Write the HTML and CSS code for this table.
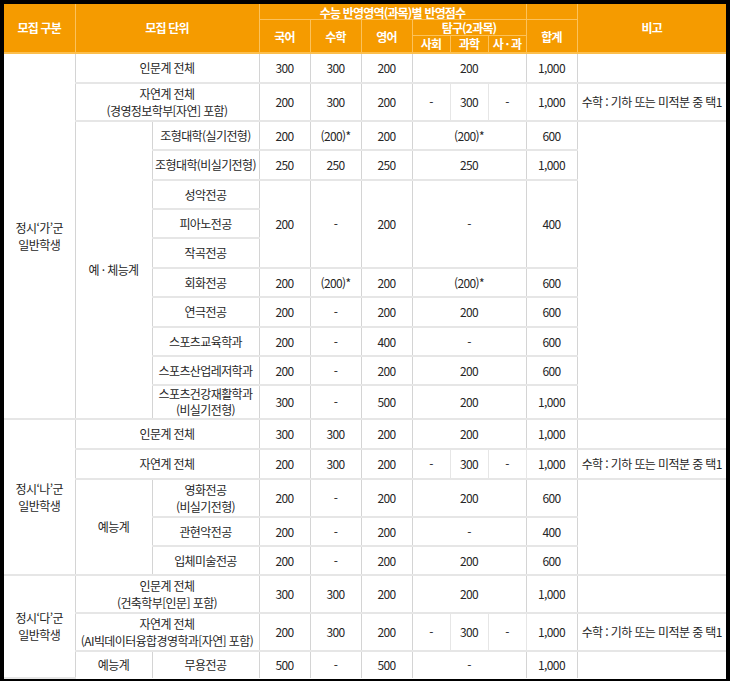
FILE: index.html
```html
<!DOCTYPE html>
<html lang="ko">
<head>
<meta charset="utf-8">
<title>수능 반영영역별 반영점수</title>
<link rel="stylesheet" href="styles.css">
</head>
<body>
<table class="score">
  <colgroup>
    <col class="c-gubun">
    <col class="c-unit-a">
    <col class="c-unit-b">
    <col class="c-n">
    <col class="c-n">
    <col class="c-n">
    <col class="c-s">
    <col class="c-s">
    <col class="c-s">
    <col class="c-n">
    <col class="c-note">
  </colgroup>
  <thead>
    <tr class="h15">
      <th rowspan="3">모집 구분</th>
      <th rowspan="3" colspan="2">모집 단위</th>
      <th colspan="6" class="top">수능 반영영역(과목)별 반영점수</th>
      <th class="blank"></th>
      <th rowspan="3">비고</th>
    </tr>
    <tr class="h16">
      <th rowspan="2" class="big">국어</th>
      <th rowspan="2" class="big">수학</th>
      <th rowspan="2" class="big">영어</th>
      <th colspan="3">탐구(2과목)</th>
      <th rowspan="2" class="big">합계</th>
    </tr>
    <tr class="h17">
      <th>사회</th>
      <th>과학</th>
      <th>사 · 과</th>
    </tr>
  </thead>
  <tbody>
    <!-- 가군 -->
    <tr class="r30 grp first">
      <td rowspan="12">정시‘가’군<br>일반학생</td>
      <td colspan="2">인문계 전체</td>
      <td>300</td><td>300</td><td>200</td>
      <td colspan="3">200</td>
      <td>1,000</td>
      <td></td>
    </tr>
    <tr class="r38">
      <td colspan="2">자연계 전체<br>(경영정보학부[자연] 포함)</td>
      <td>200</td><td>300</td><td>200</td>
      <td class="sub">-</td><td class="sub">300</td><td class="sub">-</td>
      <td>1,000</td>
      <td class="note">수학 : 기하 또는 미적분 중 택1</td>
    </tr>
    <tr class="r29">
      <td rowspan="10">예 · 체능계</td>
      <td>조형대학(실기전형)</td>
      <td>200</td><td>(200)*</td><td>200</td>
      <td colspan="3">(200)*</td>
      <td>600</td>
      <td rowspan="10"></td>
    </tr>
    <tr class="r30">
      <td>조형대학(비실기전형)</td>
      <td>250</td><td>250</td><td>250</td>
      <td colspan="3">250</td>
      <td>1,000</td>
    </tr>
    <tr class="r29">
      <td>성악전공</td>
      <td rowspan="3">200</td><td rowspan="3">-</td><td rowspan="3">200</td>
      <td rowspan="3" colspan="3">-</td>
      <td rowspan="3">400</td>
    </tr>
    <tr class="r29">
      <td>피아노전공</td>
    </tr>
    <tr class="r30">
      <td>작곡전공</td>
    </tr>
    <tr class="r29">
      <td>회화전공</td>
      <td>200</td><td>(200)*</td><td>200</td>
      <td colspan="3">(200)*</td>
      <td>600</td>
    </tr>
    <tr class="r30">
      <td>연극전공</td>
      <td>200</td><td>-</td><td>200</td>
      <td colspan="3">200</td>
      <td>600</td>
    </tr>
    <tr class="r29">
      <td>스포츠교육학과</td>
      <td>200</td><td>-</td><td>400</td>
      <td colspan="3">-</td>
      <td>600</td>
    </tr>
    <tr class="r29">
      <td>스포츠산업레저학과</td>
      <td>200</td><td>-</td><td>200</td>
      <td colspan="3">200</td>
      <td>600</td>
    </tr>
    <tr class="r34">
      <td class="tight">스포츠건강재활학과<br>(비실기전형)</td>
      <td>300</td><td>-</td><td>500</td>
      <td colspan="3">200</td>
      <td>1,000</td>
    </tr>
    <!-- 나군 -->
    <tr class="r30 grp">
      <td rowspan="5">정시‘나’군<br>일반학생</td>
      <td colspan="2">인문계 전체</td>
      <td>300</td><td>300</td><td>200</td>
      <td colspan="3">200</td>
      <td>1,000</td>
      <td></td>
    </tr>
    <tr class="r30">
      <td colspan="2">자연계 전체</td>
      <td>200</td><td>300</td><td>200</td>
      <td class="sub">-</td><td class="sub">300</td><td class="sub">-</td>
      <td>1,000</td>
      <td class="note">수학 : 기하 또는 미적분 중 택1</td>
    </tr>
    <tr class="r38">
      <td rowspan="3">예능계</td>
      <td>영화전공<br>(비실기전형)</td>
      <td>200</td><td>-</td><td>200</td>
      <td colspan="3">200</td>
      <td>600</td>
      <td rowspan="3"></td>
    </tr>
    <tr class="r29">
      <td>관현악전공</td>
      <td>200</td><td>-</td><td>200</td>
      <td colspan="3">-</td>
      <td>400</td>
    </tr>
    <tr class="r29">
      <td>입체미술전공</td>
      <td>200</td><td>-</td><td>200</td>
      <td colspan="3">200</td>
      <td>600</td>
    </tr>
    <!-- 다군 -->
    <tr class="r38 grp">
      <td rowspan="3">정시‘다’군<br>일반학생</td>
      <td colspan="2">인문계 전체<br>(건축학부[인문] 포함)</td>
      <td>300</td><td>300</td><td>200</td>
      <td colspan="3">200</td>
      <td>1,000</td>
      <td></td>
    </tr>
    <tr class="r38">
      <td colspan="2">자연계 전체<br>(AI빅데이터융합경영학과[자연] 포함)</td>
      <td>200</td><td>300</td><td>200</td>
      <td class="sub">-</td><td class="sub">300</td><td class="sub">-</td>
      <td>1,000</td>
      <td class="note">수학 : 기하 또는 미적분 중 택1</td>
    </tr>
    <tr class="r27 last">
      <td>예능계</td>
      <td>무용전공</td>
      <td>500</td><td>-</td><td>500</td>
      <td colspan="3">-</td>
      <td>1,000</td>
      <td></td>
    </tr>
  </tbody>
</table>
</body>
</html>
```

FILE: styles.css
```css
html, body {
  margin: 0;
  padding: 0;
  background: #000;
}

body {
  padding: 4px;
  font-family: "Noto Sans CJK KR", "Noto Sans", sans-serif;
  font-size: 12px;
  letter-spacing: -0.6px;
  color: #262626;
}

.score {
  width: 722px;
  border-collapse: collapse;
  table-layout: fixed;
  background: #fff;
}

.c-gubun { width: 71px; }
.c-unit-a { width: 77px; }
.c-unit-b { width: 107px; }
.c-n { width: 51px; }
.c-s { width: 38px; }
.c-note { width: 149px; }

.score th,
.score td {
  padding: 0;
  text-align: center;
  vertical-align: middle;
  line-height: 17px;
  white-space: nowrap;
}

.score td { overflow: hidden; }
.score td.tight { line-height: 16px; }

/* header */
.score thead th {
  background: #f59b00;
  color: #fff;
  font-weight: bold;
  letter-spacing: -0.8px;
  border: 1px solid #fcc25a;
  line-height: 14px;
}
.score thead th.top { line-height: 13px; padding-top: 2px; }
.score thead tr:first-child th { border-top: 0; }
.score thead th:first-child { border-left: 0; }
.score thead tr:first-child th:last-child { border-right: 0; }
.score thead tr:last-child th,
.score thead th[rowspan="3"],
.score thead th.big { border-bottom: 2px solid #fcbf4e; }
.score thead th.big { padding-top: 2px; }

.h15 { height: 15px; }
.h16 { height: 16px; }
.h17 { height: 17px; }

/* body */
.score td {
  border-left: 1px solid #d4d4d4;
  border-right: 1px solid #d4d4d4;
  border-bottom: 2px solid #e6e6e6;
}
.score td:first-child { border-left: 0; }
.score td:last-child { border-right: 0; }
.score td.sub { border-left-color: #e6e6e6; border-right-color: #e6e6e6; }
.score tr.grp td { border-top: 2px solid #cfcfcf; }
.score tr.first td { border-top: 0; }
.score tr.last td { border-bottom: 0; }

.r27 { height: 27px; }
.r29 { height: 29px; }
.r30 { height: 30px; }
.r34 { height: 34px; }
.r38 { height: 38px; }
```
